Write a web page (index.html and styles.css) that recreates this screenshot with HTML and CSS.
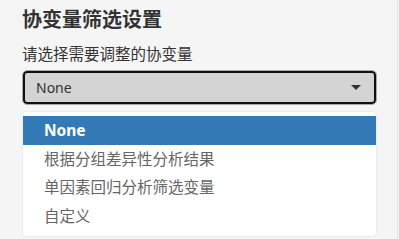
FILE: index.html
```html
<!DOCTYPE html>
<html lang="zh">
<head>
    <meta charset="UTF-8">
    <meta name="viewport" content="width=device-width, initial-scale=1.0">
    <title>协变量筛选设置</title>
    <link rel="stylesheet" href="styles.css">
</head>
<body>
    <div class="panel">
        <h3>协变量筛选设置</h3>
        <label class="control-label">请选择需要调整的协变量</label>
        <div class="select-wrap">
            <div class="select-input">
                <span>None</span>
                <span class="caret"></span>
            </div>
            <div class="dropdown">
                <div class="option active">None</div>
                <div class="option">根据分组差异性分析结果</div>
                <div class="option">单因素回归分析筛选变量</div>
                <div class="option">自定义</div>
            </div>
        </div>
    </div>
</body>
</html>
```

FILE: styles.css
```css
body {
    margin: 0;
    background: #f5f5f5;
    font-family: "Noto Sans", "Noto Sans CJK SC", sans-serif;
    color: #333;
}
.panel {
    width: 375px;
    height: 239px;
    padding: 0 0 0 22px;
    border-right: 1px solid #e3e3e3;
    background: #f5f5f5;
    box-sizing: content-box;
    overflow: hidden;
}
h3 {
    margin: 0;
    padding-top: 7px;
    font-size: 20px;
    line-height: 26px;
    font-weight: bold;
    color: #333;
}
.control-label {
    display: block;
    margin-top: 11px;
    font-size: 15.5px;
    line-height: 20px;
    color: #333;
}
.select-wrap {
    margin-top: 6px;
    width: 355px;
}
.select-input {
    height: 35px;
    box-sizing: border-box;
    border: 1px solid #aaa;
    border-radius: 5px;
    box-shadow: inset 0 0 0 2px #111;
    background: #d4d4d4;
    display: flex;
    align-items: center;
    justify-content: space-between;
    padding: 0 13px 0 13px;
    font-size: 14px;
    color: #333;
}
.caret {
    width: 0;
    height: 0;
    border-left: 5px solid transparent;
    border-right: 5px solid transparent;
    border-top: 5px solid #333;
    margin-right: 2px;
}
.dropdown {
    margin-top: 6px;
    background: #fff;
    border: 1px solid #ececec;
    border-radius: 4px;
    padding: 4px 0 6px;
}
.option {
    height: 28.5px;
    line-height: 28.5px;
    padding-left: 21px;
    font-size: 15.5px;
    color: #666;
}
.option.active {
    background: #337ab7;
    color: #fff;
    font-weight: bold;
}
```
